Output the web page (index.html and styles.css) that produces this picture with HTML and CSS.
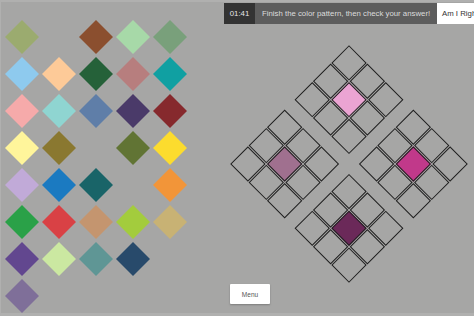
FILE: index.html
```html
<!DOCTYPE html>
<html lang="en">
<head>
    <meta charset="UTF-8">
    <meta name="viewport" content="width=device-width, initial-scale=1.0">
    <title>Color Pattern</title>
    <link rel="stylesheet" href="styles.css">
</head>
<body>
    <div class="app">
        <aside class="palette">
            <div class="slot"><span class="chip sage"></span></div>
            <div class="slot"></div>
            <div class="slot"><span class="chip brown"></span></div>
            <div class="slot"><span class="chip mint"></span></div>
            <div class="slot"><span class="chip fern"></span></div>

            <div class="slot"><span class="chip sky"></span></div>
            <div class="slot"><span class="chip peach"></span></div>
            <div class="slot"><span class="chip forest"></span></div>
            <div class="slot"><span class="chip rose"></span></div>
            <div class="slot"><span class="chip teal"></span></div>

            <div class="slot"><span class="chip pink"></span></div>
            <div class="slot"><span class="chip aqua"></span></div>
            <div class="slot"><span class="chip slate"></span></div>
            <div class="slot"><span class="chip indigo"></span></div>
            <div class="slot"><span class="chip maroon"></span></div>

            <div class="slot"><span class="chip cream"></span></div>
            <div class="slot"><span class="chip olive"></span></div>
            <div class="slot"></div>
            <div class="slot"><span class="chip moss"></span></div>
            <div class="slot"><span class="chip yellow"></span></div>

            <div class="slot"><span class="chip lavender"></span></div>
            <div class="slot"><span class="chip blue"></span></div>
            <div class="slot"><span class="chip petrol"></span></div>
            <div class="slot"></div>
            <div class="slot"><span class="chip orange"></span></div>

            <div class="slot"><span class="chip green"></span></div>
            <div class="slot"><span class="chip red"></span></div>
            <div class="slot"><span class="chip tan"></span></div>
            <div class="slot"><span class="chip lime"></span></div>
            <div class="slot"><span class="chip khaki"></span></div>

            <div class="slot"><span class="chip purple"></span></div>
            <div class="slot"><span class="chip pale-lime"></span></div>
            <div class="slot"><span class="chip sea"></span></div>
            <div class="slot"><span class="chip navy"></span></div>
            <div class="slot"></div>

            <div class="slot"><span class="chip heather"></span></div>
        </aside>

        <main class="board">
            <div class="status">
                <span class="timer">01:41</span>
                <span class="hint">Finish the color pattern, then check your answer!</span>
                <button class="check">Am I Right?</button>
            </div>

            <div class="puzzle">
                <div class="pattern">
                    <div class="cluster">
                        <div class="cell"></div><div class="cell"></div><div class="cell"></div>
                        <div class="cell"></div><div class="cell light-pink"></div><div class="cell"></div>
                        <div class="cell"></div><div class="cell"></div><div class="cell"></div>
                    </div>
                    <div class="cluster">
                        <div class="cell"></div><div class="cell"></div><div class="cell"></div>
                        <div class="cell"></div><div class="cell magenta"></div><div class="cell"></div>
                        <div class="cell"></div><div class="cell"></div><div class="cell"></div>
                    </div>
                    <div class="cluster">
                        <div class="cell"></div><div class="cell"></div><div class="cell"></div>
                        <div class="cell"></div><div class="cell mauve"></div><div class="cell"></div>
                        <div class="cell"></div><div class="cell"></div><div class="cell"></div>
                    </div>
                    <div class="cluster">
                        <div class="cell"></div><div class="cell"></div><div class="cell"></div>
                        <div class="cell"></div><div class="cell plum"></div><div class="cell"></div>
                        <div class="cell"></div><div class="cell"></div><div class="cell"></div>
                    </div>
                </div>
            </div>

            <button class="menu">Menu</button>
        </main>
    </div>
</body>
</html>
```

FILE: styles.css
```css
:root {
    --bg: #a6a6a5;
    --frame: #b0b0af;
    --line: #1f1f1f;
}

* {
    margin: 0;
    padding: 0;
    box-sizing: border-box;
}

body {
    font-family: 'Liberation Sans', Arial, sans-serif;
    background-color: var(--frame);
    overflow: hidden;
}

.app {
    display: flex;
    height: 316px;
    background-color: var(--bg);
    border-top: 2px solid var(--frame);
    border-left: 1px solid var(--frame);
    border-bottom: 3px solid var(--frame);
    overflow: hidden;
}

/* colour picker on the left */
.palette {
    width: 223px;
    flex-shrink: 0;
    display: grid;
    grid-template-columns: repeat(5, 37px);
    grid-auto-rows: 37px;
    align-content: start;
    padding: 16.5px 0 0 2.5px;
}

.slot {
    display: flex;
    align-items: center;
    justify-content: center;
}

.chip {
    width: 24px;
    height: 24px;
    transform: rotate(45deg);
}

.sage { background: #9bab6f; }
.brown { background: #8b4f2f; }
.mint { background: #a7d9a8; }
.fern { background: #79a07b; }
.sky { background: #8ecaee; }
.peach { background: #fdca98; }
.forest { background: #256139; }
.rose { background: #b77e7e; }
.teal { background: #10a0a2; }
.pink { background: #f6aaaa; }
.aqua { background: #8fd5d1; }
.slate { background: #5f7ea8; }
.indigo { background: #4a3a69; }
.maroon { background: #86292d; }
.cream { background: #fff59b; }
.olive { background: #8a7830; }
.moss { background: #617434; }
.yellow { background: #fcdc2e; }
.lavender { background: #c1aad8; }
.blue { background: #1b7ac1; }
.petrol { background: #196468; }
.orange { background: #f29539; }
.green { background: #2aa148; }
.red { background: #d94145; }
.tan { background: #c4956f; }
.lime { background: #a3cc3d; }
.khaki { background: #c8b274; }
.purple { background: #62478f; }
.pale-lime { background: #cbe8a1; }
.sea { background: #5f9695; }
.navy { background: #284a6b; }
.heather { background: #7f6f99; }

/* board on the right */
.board {
    flex: 1;
    min-width: 0;
    display: flex;
    flex-direction: column;
    overflow: hidden;
}

.status {
    display: flex;
    height: 21px;
    margin-top: 1px;
    font-size: 7.8px;
    white-space: nowrap;
}

.timer {
    width: 31px;
    flex-shrink: 0;
    display: flex;
    align-items: center;
    justify-content: center;
    background-color: #333333;
    color: #e6e6e6;
}

.hint {
    width: 182px;
    flex-shrink: 0;
    display: flex;
    align-items: center;
    padding: 0 7px;
    background-color: #5d5d5d;
    color: #dcdcdc;
}

.check {
    flex-shrink: 0;
    width: 60px;
    border: none;
    background-color: #ffffff;
    color: #333333;
    font-family: inherit;
    font-size: 7.8px;
    text-align: left;
    padding: 0 5px;
}

.puzzle {
    height: 238px;
    margin-top: 21px;
    display: flex;
    align-items: center;
    justify-content: center;
}

.pattern {
    display: grid;
    grid-template-columns: repeat(2, 77px);
    gap: 14px;
    transform: rotate(45deg);
}

.cluster {
    display: grid;
    grid-template-columns: repeat(3, 25px);
    grid-auto-rows: 25px;
    gap: 1px;
}

.cell {
    border: 1px solid var(--line);
}

.light-pink { background: #eba4d3; }
.magenta { background: #c1398a; }
.mauve { background: #a0708f; }
.plum { background: #6b2959; }

.menu {
    align-self: flex-start;
    width: 40px;
    height: 20px;
    margin: 1px 0 0 6px;
    border: none;
    border-radius: 1px;
    background-color: #ffffff;
    box-shadow: 0 1px 2px rgba(0, 0, 0, 0.25);
    color: #555555;
    font-family: inherit;
    font-size: 6.5px;
}
```
